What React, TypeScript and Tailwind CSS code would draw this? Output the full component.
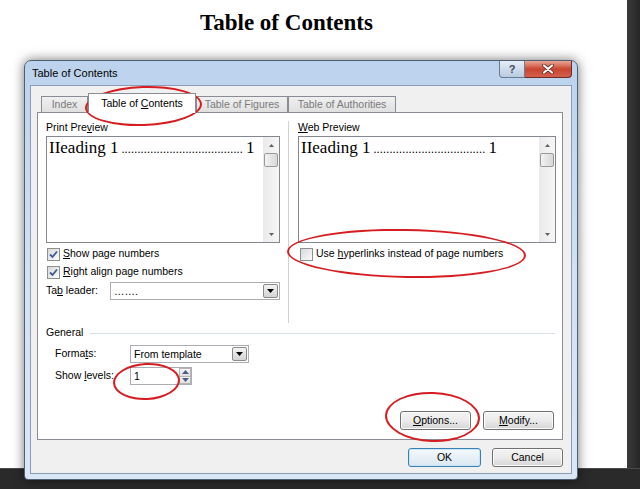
import React from 'react'

const ui = "font-['Liberation_Sans',Arial,sans-serif]"

function U({ children }: { children: React.ReactNode }) {
  return <span className="underline decoration-1 underline-offset-[1px]">{children}</span>
}

function Check({ checked }: { checked?: boolean }) {
  return (
    <span className="flex h-[13px] w-[13px] shrink-0 items-center justify-center border border-[#8e8f8f] bg-gradient-to-br from-[#d9d9d9] to-[#fbfbfb]">
      {checked && (
        <svg width="9" height="9" viewBox="0 0 9 9">
          <path d="M1 4.5 L3.5 7 L8 1.5" stroke="#3d5a98" strokeWidth="1.8" fill="none" />
        </svg>
      )}
    </span>
  )
}

function Arrow({ up, color = '#000' }: { up?: boolean; color?: string }) {
  return (
    <svg width="7" height="4" viewBox="0 0 7 4">
      <path d={up ? 'M3.5 0L7 4H0z' : 'M0 0h7L3.5 4z'} fill={color} />
    </svg>
  )
}

function Combo({ value, width }: { value: string; width: string }) {
  return (
    <div className={`flex h-[18px] ${width} border border-[#abadb3] bg-white`}>
      <div className="flex-1 pl-[3px] text-[10.5px] leading-[16px]">{value}</div>
      <div className="m-px flex w-[15px] items-center justify-center rounded-[2px] border border-[#8a8a8a] bg-gradient-to-b from-[#f4f4f4] to-[#d3d3d3]">
        <Arrow />
      </div>
    </div>
  )
}

function ScrollBar() {
  return (
    <div className="flex w-[16px] flex-col items-center bg-gradient-to-r from-[#eaeaea] to-[#f6f6f6]">
      <div className="flex h-[16px] items-center justify-center">
        <svg width="5" height="3" viewBox="0 0 5 3">
          <path d="M2.5 0L5 3H0z" fill="#606060" />
        </svg>
      </div>
      <div className="h-[14px] w-[14px] rounded-[2px] border border-[#9a9a9a] bg-gradient-to-r from-[#f3f3f3] to-[#d8d8d8]" />
      <div className="flex-1" />
      <div className="flex h-[16px] items-center justify-center">
        <svg width="5" height="3" viewBox="0 0 5 3">
          <path d="M0 0h5L2.5 3z" fill="#606060" />
        </svg>
      </div>
    </div>
  )
}

function Preview({ dots }: { dots: number }) {
  return (
    <div className="flex h-[107px] border border-[#828790] bg-white">
      <div className="flex-1 pl-[2px] pt-[2px] font-['Liberation_Serif',serif] text-[17px] leading-[17px] text-black">
        <div className="flex items-baseline whitespace-nowrap">
          <span>IIeading 1</span>
          <span className="mx-[3px] text-[12px] tracking-[0.2px]">{'.'.repeat(dots)}</span>
          <span>1</span>
        </div>
      </div>
      <ScrollBar />
    </div>
  )
}

function Button({ children, primary }: { children: React.ReactNode; primary?: boolean }) {
  return (
    <div
      className={`flex h-[19px] items-center justify-center rounded-[3px] border text-[10.5px] text-black ${
        primary
          ? 'w-[73px] border-[#3c7fb1] bg-gradient-to-b from-[#f4f9fd] to-[#dbe7f0] shadow-[inset_0_0_0_1px_#c6e6f8]'
          : 'w-[71px] border-[#707070] bg-gradient-to-b from-[#f3f3f3] via-[#ebebeb] to-[#d6d6d6] shadow-[inset_0_0_0_1px_#fbfbfb]'
      }`}
    >
      <span>{children}</span>
    </div>
  )
}

function Tab({ label, width, active }: { label: React.ReactNode; width: string; active?: boolean }) {
  return (
    <div
      className={`flex items-center justify-center border border-b-0 border-[#898c95] text-[10.5px] ${width} ${
        active
          ? 'relative z-10 -mb-px h-[20px] bg-white text-black'
          : 'h-[16px] bg-gradient-to-b from-[#f0f0f0] to-[#e0e0e0] text-[#7a7a7a]'
      }`}
    >
      <span>{label}</span>
    </div>
  )
}

function Dialog() {
  return (
    <div
      className={`absolute left-[24px] top-[60px] flex h-[420px] w-[554px] flex-col rounded-t-[7px] rounded-b-[4px] border border-[#4e5e73] bg-gradient-to-b from-[#bcd2ed] via-[#d2e1f3] to-[#dae7f6] shadow-[0_0_12px_rgba(0,0,0,0.55)] ${ui}`}
    >
      <div className="flex h-[24px] shrink-0 items-start justify-between">
        <span className="pl-[7px] pt-[6px] text-[11px] leading-[13px] text-black">Table of Contents</span>
        <div className="mr-[5px] flex h-[17px]">
          <div className="flex w-[26px] items-center justify-center rounded-bl-[4px] border border-t-0 border-[#6b7b90] bg-gradient-to-b from-[#e6eef7] to-[#b9cbe1] text-[11px] font-bold text-[#3e4b5e]">
            ?
          </div>
          <div className="flex w-[47px] items-center justify-center rounded-br-[4px] border border-l-0 border-t-0 border-[#6e2a24] bg-gradient-to-b from-[#e9a597] via-[#c9452f] to-[#d35f4d]">
            <svg width="12" height="10" viewBox="0 0 12 10">
              <path d="M2 1.5 L10 8.5 M10 1.5 L2 8.5" stroke="#5a1d17" strokeWidth="3.6" strokeLinecap="round" />
              <path d="M2 1.5 L10 8.5 M10 1.5 L2 8.5" stroke="#ffffff" strokeWidth="2.2" strokeLinecap="round" />
            </svg>
          </div>
        </div>
      </div>

      <div className="mx-[5px] mb-[5px] flex flex-1 flex-col border border-[#8a9db5] bg-[#f0f0f0] text-black">
        <div className="ml-[10px] mt-[6px] flex h-[20px] items-end">
          <Tab label="Index" width="w-[47px]" />
          <Tab
            label={
              <>
                Table of <U>C</U>ontents
              </>
            }
            width="w-[108px]"
            active
          />
          <Tab label="Table of Figures" width="w-[92px]" />
          <Tab label="Table of Authorities" width="w-[108px]" />
        </div>

        <div className="ml-[6px] flex h-[328px] w-[526px] flex-col border border-[#898c95] bg-white pl-[8px] pt-[8px] text-[10.5px]">
          <div className="flex h-[202px]">
            <div className="flex w-[234px] flex-col">
              <div className="h-[15px] leading-[13px]">
                Print Pre<U>v</U>iew
              </div>
              <Preview dots={38} />
              <div className="ml-px mt-[2px] flex h-[18px] items-center gap-[3px]">
                <Check checked />
                <span>
                  <U>S</U>how page numbers
                </span>
              </div>
              <div className="ml-px flex h-[18px] items-center gap-[3px]">
                <Check checked />
                <span>
                  <U>R</U>ight align page numbers
                </span>
              </div>
              <div className="mt-px flex h-[18px] items-center">
                <span className="w-[64px]">
                  Ta<U>b</U> leader:
                </span>
                <Combo value="……." width="w-[170px]" />
              </div>
            </div>
            <div className="ml-[8px] w-px bg-[#d0d0d0]" />
            <div className="ml-[9px] flex w-[258px] flex-col">
              <div className="h-[15px] leading-[13px]">
                <U>W</U>eb Preview
              </div>
              <Preview dots={35} />
              <div className="ml-[2px] mt-[2px] flex h-[18px] items-center gap-[3px]">
                <Check />
                <span>
                  Use <U>h</U>yperlinks instead of page numbers
                </span>
              </div>
            </div>
          </div>

          <div className="mr-[7px] mt-[3px] flex h-[14px] items-center">
            <span>General</span>
            <div className="ml-[7px] h-px flex-1 bg-[#d5dfe5]" />
          </div>
          <div className="mt-[5px] flex h-[18px] items-center pl-[9px]">
            <span className="w-[75px]">
              Forma<U>t</U>s:
            </span>
            <Combo value="From template" width="w-[119px]" />
          </div>
          <div className="mt-[4px] flex h-[18px] items-center pl-[9px]">
            <span className="w-[75px]">
              Show <U>l</U>evels:
            </span>
            <div className="flex h-[18px] w-[62px] border border-[#abadb3] bg-white">
              <div className="flex-1 pl-[3px] leading-[16px]">1</div>
              <div className="flex w-[12px] flex-col">
                <div className="flex flex-1 items-center justify-center border border-[#b5b5b5] bg-gradient-to-b from-[#f6f6f6] to-[#e0e0e0]">
                  <Arrow up color="#4a5f88" />
                </div>
                <div className="flex flex-1 items-center justify-center border border-t-0 border-[#b5b5b5] bg-gradient-to-b from-[#f6f6f6] to-[#e0e0e0]">
                  <Arrow color="#4a5f88" />
                </div>
              </div>
            </div>
          </div>
          <div className="mr-[8px] mt-[26px] flex justify-end gap-[12px]">
            <Button>
              <U>O</U>ptions...
            </Button>
            <Button>
              <U>M</U>odify...
            </Button>
          </div>
        </div>

        <div className="mr-[8px] mt-[8px] flex justify-end gap-[11px]">
          <Button primary>OK</Button>
          <Button>Cancel</Button>
        </div>
      </div>
    </div>
  )
}

export default function App() {
  return (
    <div className="relative h-[489px] w-[640px] overflow-hidden bg-white">
      <div className="flex h-[468px]">
        <div className="flex-1">
          <h1 className="pl-[200px] pt-[9px] font-['Liberation_Serif',serif] text-[23px] font-bold leading-[28px] text-black">
            Table of Contents
          </h1>
        </div>
        <div className="w-[13px] bg-gradient-to-r from-[#3a3a3a] to-[#262626]" />
      </div>
      <div className="h-[21px] border-t border-[#4a4a4a] bg-[#2a2a2a]" />

      <Dialog />

      <div className="absolute left-[85px] top-[86px] h-[40px] w-[117px] -rotate-2 rounded-[50%] border-[2.5px] border-[#d61e22]" />
      <div className="absolute left-[287px] top-[229px] h-[49px] w-[239px] rotate-1 rounded-[50%] border-[2.5px] border-[#d61e22]" />
      <div className="absolute left-[113px] top-[363px] h-[37px] w-[67px] -rotate-3 rounded-[50%] border-[2.5px] border-[#d61e22]" />
      <div className="absolute left-[385px] top-[392px] h-[50px] w-[95px] rotate-2 rounded-[50%] border-[2.5px] border-[#d61e22]" />
    </div>
  )
}
